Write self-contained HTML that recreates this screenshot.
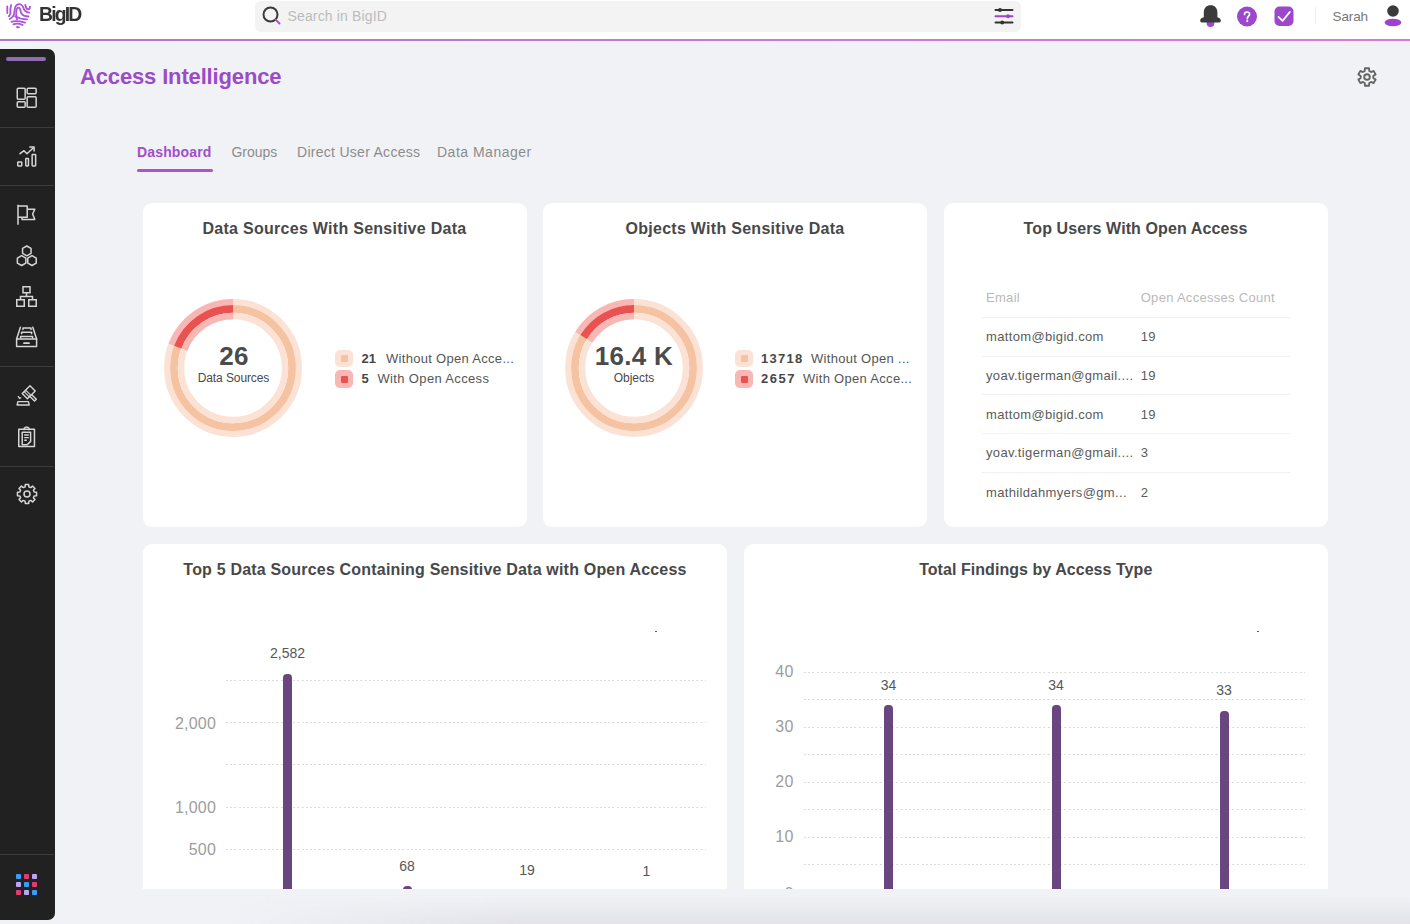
<!DOCTYPE html>
<html><head><meta charset="utf-8">
<style>
*{margin:0;padding:0;box-sizing:border-box}
html,body{width:1410px;height:924px;overflow:hidden;background:#f1f2f6;font-family:"Liberation Sans",sans-serif}
body{position:relative}
.a{position:absolute;white-space:nowrap;line-height:1}
svg{position:absolute;overflow:visible}
#hdr{position:absolute;left:0;top:0;width:1410px;height:39px;background:#fff}
#pline{position:absolute;left:0;top:39px;width:1410px;height:2.3px;background:linear-gradient(90deg,#ad77cf,#c47ad5 50%,#d97ad9)}
#side{position:absolute;left:0;top:49px;width:54.6px;height:870.5px;background:#212121;border-radius:0 7px 7px 0}
.sep{position:absolute;left:0;width:54px;height:1px;background:#3c3c3c}
.card{position:absolute;background:#fff;border-radius:9px;overflow:hidden}
.ttl{position:absolute;left:0;right:0;text-align:center;font-weight:700;font-size:16px;color:#484848;white-space:nowrap;line-height:1}
.tab{font-size:14px;color:#8c8c8c}
.lg{font-size:13px;color:#555}
.lgb{font-size:13px;color:#474747;font-weight:700}
.th{font-size:13px;color:#b9b9b9;letter-spacing:0.3px}
.td{font-size:13px;color:#5b5b5b;letter-spacing:0.35px}
.hr{position:absolute;left:38.5px;width:308px;height:1px;background:#f1f1f1}
.gl{position:absolute;height:1px;background:repeating-linear-gradient(90deg,#dcdcdc 0,#dcdcdc 2px,transparent 2px,transparent 4.2px)}
.yl{position:absolute;font-size:16px;color:#9d9d9d;letter-spacing:0.2px;text-align:right;line-height:1}
.bl{position:absolute;font-size:14px;color:#575757;text-align:center;line-height:1;width:60px}
.bar{position:absolute;width:9px;background:#6a4680;border-radius:3.8px 3.8px 0 0}
</style></head><body>
<div id="hdr"></div>
<div id="pline"></div>

<!-- logo -->
<svg style="left:0;top:0" width="36" height="32" viewBox="0 0 36 32">
  <g fill="none" stroke="#aa52d8" stroke-width="1.8" stroke-linecap="round" stroke-linejoin="round">
    <path d="M7.3 6.5 V13"/>
    <path d="M11.1 5 C10.2 8 10.2 11 10.4 13.2 C10.2 14.6 9.6 15.6 8.9 16.2"/>
    <path d="M9.8 19 C12.5 17.5 14 15.5 14.4 12.5 C14.6 9 14.6 6.5 17 4.8 C19.5 3.3 22.5 4.5 23.3 7.5 C24 10.5 25.5 12.2 29.3 12.6"/>
    <path d="M17 19.5 C16 16.5 16 13 16.4 10.5 C16.8 8 17.8 7.3 18.8 7.6 C20 8 20.4 9.5 20.8 12 C21.3 14.8 24 16.3 28.5 16.5"/>
    <path d="M25.3 5 C25.8 7.5 26.5 9.2 28 9.3 C29.5 9.3 30 8.5 30 6.6"/>
    <path d="M15 16.3 C18.5 18.3 22 19.3 27 19.4"/>
    <path d="M11.4 21.8 C15 20.5 19 21 25.2 22.6"/>
    <path d="M13.5 24.4 C16 23.2 19.5 23.6 22.7 25"/>
    <path d="M17 27 L19 27.3"/>
  </g>
</svg>
<div class="a" style="left:39px;top:3.8px;font-size:20px;font-weight:700;color:#333;letter-spacing:-1.9px;transform:scaleX(0.97);transform-origin:left">BigID</div>

<!-- search -->
<div style="position:absolute;left:254.5px;top:1px;width:766px;height:31px;background:#f3f3f3;border-radius:6px"></div>
<svg style="left:260px;top:5px" width="24" height="22" viewBox="0 0 24 22">
  <circle cx="10.5" cy="9.5" r="7" fill="none" stroke="#3a3a3a" stroke-width="2"/>
  <path d="M15.6 14.6 L19.5 18.5" stroke="#a64fd0" stroke-width="2" stroke-linecap="round"/>
</svg>
<div class="a" style="left:287.5px;top:9px;font-size:14px;color:#bcbcbc;letter-spacing:0.15px">Search in BigID</div>
<svg style="left:993px;top:6px" width="22" height="22" viewBox="0 0 22 22">
  <g stroke-width="2" stroke-linecap="round">
  <path d="M2.5 4 H19.5" stroke="#333"/><circle cx="7" cy="4" r="2" fill="#333"/>
  <path d="M2.5 10.2 H19.5" stroke="#a23fd0"/><circle cx="15" cy="10.2" r="2" fill="#a23fd0"/>
  <path d="M2.5 16.5 H19.5" stroke="#333"/><circle cx="9.2" cy="16.5" r="2" fill="#333"/>
  </g>
</svg>

<!-- header right -->
<svg style="left:1198px;top:4px" width="26" height="24" viewBox="0 0 26 24">
  <circle cx="12.5" cy="19" r="3.9" fill="#a245d0"/>
  <path d="M12.6 1.3 C8.5 1.3 5.8 4 5.8 8.5 L5.8 13.3 C3.5 13.8 2.2 15 2.2 16.4 C2.2 17.8 3 18.6 4.5 18.6 L20.5 18.6 C22 18.6 22.8 17.8 22.8 16.4 C22.8 15 21.5 13.8 19.4 13.3 L19.4 8.5 C19.4 4 16.7 1.3 12.6 1.3 Z" fill="#3b3b3b"/>
</svg>
<svg style="left:1236px;top:5.5px" width="22" height="22" viewBox="0 0 22 22">
  <circle cx="11" cy="10.5" r="10" fill="#9c47cc"/>
  <path d="M8.5 8.4 C8.5 6.8 9.6 6 11 6 C12.5 6 13.6 6.9 13.6 8.3 C13.6 10.1 11.3 10.4 11.3 12.6" fill="none" stroke="#fff" stroke-width="1.7" stroke-linecap="round"/>
  <circle cx="11.3" cy="15.1" r="1.05" fill="#fff"/>
</svg>
<svg style="left:1274px;top:5.7px" width="20" height="20" viewBox="0 0 20 20">
  <rect x="0.5" y="0.5" width="19" height="19.5" rx="5" fill="#9c47cc"/>
  <path d="M4.5 10.8 L8.6 14.9 L15.9 5.9" fill="none" stroke="#fff" stroke-width="1.7" stroke-linecap="round" stroke-linejoin="round"/>
</svg>
<div style="position:absolute;left:1315px;top:7px;width:1px;height:17px;background:#ececec"></div>
<div class="a" style="left:1332.5px;top:10.2px;font-size:13.5px;color:#777;letter-spacing:-0.1px">Sarah</div>
<svg style="left:1383px;top:3px" width="20" height="25" viewBox="0 0 20 25">
  <circle cx="10" cy="8" r="5.8" fill="#3a3a3a"/>
  <ellipse cx="10" cy="19.5" rx="8.3" ry="3.8" fill="#9c44cc"/>
</svg>

<!-- bottom shadow -->
<div style="position:absolute;left:0;top:896px;width:1410px;height:28px;background:linear-gradient(180deg,rgba(224,224,230,0) 0%,rgba(224,224,230,0.9) 100%);-webkit-mask-image:linear-gradient(90deg,transparent 0,transparent 230px,#000 520px,#000 100%)"></div>
<!-- sidebar -->
<div id="side"></div>
<div style="position:absolute;left:6px;top:57px;width:40px;height:4px;border-radius:2px;background:#8f6dae"></div>
<svg style="left:16px;top:87px" width="22" height="22" viewBox="0 0 22 22" fill="none" stroke="#d6d6d6" stroke-width="1.5">
  <rect x="1.25" y="1.25" width="7.9" height="10.9" rx="1"/><rect x="11.15" y="1.25" width="9" height="5.4" rx="1"/>
  <rect x="1.25" y="14.65" width="7.9" height="5.5" rx="1"/><rect x="11.15" y="9.65" width="9" height="10.5" rx="1"/>
</svg>
<div class="sep" style="top:127px"></div>
<svg style="left:16px;top:145px" width="22" height="22" viewBox="0 0 22 22" fill="none" stroke="#d6d6d6" stroke-width="1.5" stroke-linejoin="round" stroke-linecap="round">
  <rect x="1.75" y="16.95" width="4" height="4" rx="0.6"/><rect x="9.75" y="13.45" width="2.7" height="7.5" rx="0.6"/><rect x="16.15" y="9.45" width="3.5" height="11.5" rx="0.6"/>
  <path d="M4 8.7 L8 5.7 L11 8.7 L17.4 2.7"/><path d="M13.8 1.9 H18.1 V6"/>
</svg>
<div class="sep" style="top:184.5px"></div>
<svg style="left:17px;top:204px" width="20" height="22" viewBox="0 0 20 22" fill="none" stroke="#d6d6d6" stroke-width="1.5" stroke-linejoin="round">
  <path d="M1 0.8 V20.8"/><path d="M1 2 H10.2 V13.2 H1"/><path d="M10.2 5.2 H17.8 L15.6 10 L17.8 15.4 H5 V13.2"/>
</svg>
<svg style="left:15.5px;top:244.5px" width="22" height="22" viewBox="0 0 22 22" fill="none" stroke="#d6d6d6" stroke-width="1.5" stroke-linejoin="round">
  <path d="M10.80 1.00 L15.04 3.45 L15.04 8.35 L10.80 10.80 L6.56 8.35 L6.56 3.45Z"/>
  <path d="M5.60 10.70 L9.84 13.15 L9.84 18.05 L5.60 20.50 L1.36 18.05 L1.36 13.15Z"/>
  <path d="M16.00 10.70 L20.24 13.15 L20.24 18.05 L16.00 20.50 L11.76 18.05 L11.76 13.15Z"/>
</svg>
<svg style="left:16px;top:286px" width="22" height="22" viewBox="0 0 22 22" fill="none" stroke="#d6d6d6" stroke-width="1.5">
  <rect x="7" y="0.75" width="7" height="6"/><path d="M10.5 6.75 V10.5 M4.5 13 V10.5 H16.5 V13"/>
  <rect x="0.75" y="13.75" width="7.5" height="6.5"/><rect x="12.75" y="13.75" width="7.5" height="6.5"/>
</svg>
<svg style="left:16px;top:326px" width="22" height="22" viewBox="0 0 22 22" fill="none" stroke="#d6d6d6" stroke-width="1.5" stroke-linejoin="round" stroke-linecap="round">
  <path d="M4.4 1.2 L0.6 13 V20.6 H20.6 V13 L16.8 1.2"/><path d="M0.6 13 H20.6"/>
  <path d="M7 3.6 V2 H15 V3.6"/><path d="M5.6 7.8 V6.3 H15.6 V7.8"/><path d="M4.6 12 V10.6 H16.6 V12"/>
  <path d="M8 17.2 H13" stroke-width="1.8"/>
</svg>
<div class="sep" style="top:366px"></div>
<svg style="left:15px;top:384px" width="24" height="24" viewBox="0 0 24 24" fill="none" stroke="#d6d6d6" stroke-width="1.4" stroke-linejoin="round">
  <path d="M7.2 9.6 L15 1.8 L20.2 7 L12.4 14.8 Z"/>
  <path d="M10 7 L15 12" stroke-width="3.2" stroke="#d6d6d6"/>
  <path d="M10.6 7.6 L14.4 11.4" stroke-width="1.2" stroke="#202020"/>
  <path d="M16.5 10.5 L21.3 15.3 L19.5 17.1 L14.7 12.3"/>
  <path d="M2.1 21 L2.9 17.6 H13.4 L14.2 21 Z"/>
  <path d="M3 12.2 L4.6 14.6 L6.2 13.6" stroke-width="1.2"/>
</svg>
<svg style="left:17px;top:424.5px" width="20" height="23" viewBox="0 0 20 23" fill="none" stroke="#d6d6d6" stroke-width="1.5" stroke-linejoin="round">
  <rect x="1.75" y="4.25" width="15.7" height="17.3"/><path d="M7.2 5.2 V3.2 Q9.6 0.6 12 3.2 V5.2"/>
  <path d="M5.2 7.3 H13.6 V16.4 L10.2 19.8 H5.2 Z"/>
  <path d="M7.2 10 H11.8 M7.2 12.6 H11.8 M7.2 15.2 H9.8" stroke-width="1.4"/>
</svg>
<div class="sep" style="top:465.5px"></div>
<svg style="left:14.6px;top:482.4px" width="24" height="24" viewBox="0 0 24 24" fill="none" stroke="#d6d6d6" stroke-width="1.5" stroke-linejoin="round">
  <path d="M10.08 4.85 L10.32 2.45 L13.68 2.45 L13.92 4.85 L15.70 5.59 L17.56 4.05 L19.95 6.44 L18.41 8.30 L19.15 10.08 L21.55 10.32 L21.55 13.68 L19.15 13.92 L18.41 15.70 L19.95 17.56 L17.56 19.95 L15.70 18.41 L13.92 19.15 L13.68 21.55 L10.32 21.55 L10.08 19.15 L8.30 18.41 L6.44 19.95 L4.05 17.56 L5.59 15.70 L4.85 13.92 L2.45 13.68 L2.45 10.32 L4.85 10.08 L5.59 8.30 L4.05 6.44 L6.44 4.05 L8.30 5.59Z"/>
  <circle cx="12" cy="12" r="3"/>
</svg>
<div class="sep" style="top:853.5px"></div>
<svg style="left:16px;top:874px" width="22" height="22" viewBox="0 0 22 22">
  <rect x="0" y="0" width="5" height="5" rx="0.8" fill="#3b9cf6"/><rect x="8" y="0" width="5" height="5" rx="0.8" fill="#e23a6e"/><rect x="16" y="0" width="5" height="5" rx="0.8" fill="#b8a4f7"/>
  <rect x="0" y="8" width="5" height="5" rx="0.8" fill="#b8a4f7"/><rect x="8" y="8" width="5" height="5" rx="0.8" fill="#3b9cf6"/><rect x="16" y="8" width="5" height="5" rx="0.8" fill="#e23a6e"/>
  <rect x="0" y="16" width="5" height="5" rx="0.8" fill="#e23a6e"/><rect x="8" y="16" width="5" height="5" rx="0.8" fill="#b8a4f7"/><rect x="16" y="16" width="5" height="5" rx="0.8" fill="#3b9cf6"/>
</svg>

<!-- title & tabs -->
<div class="a" style="left:80px;top:66px;font-size:22px;font-weight:700;color:#9a4cc6;letter-spacing:-0.15px">Access Intelligence</div>
<svg style="left:1354.6px;top:64.5px" width="24" height="24" viewBox="0 0 24 24" fill="none" stroke="#646464" stroke-width="1.9" stroke-linejoin="round">
  <path d="M9.71 6.03 L9.98 3.23 L14.02 3.23 L14.29 6.03 L16.03 7.03 L18.58 5.86 L20.61 9.37 L18.32 11.00 L18.32 13.00 L20.61 14.63 L18.58 18.14 L16.03 16.97 L14.29 17.97 L14.02 20.77 L9.98 20.77 L9.71 17.97 L7.97 16.97 L5.42 18.14 L3.39 14.63 L5.68 13.00 L5.68 11.00 L3.39 9.37 L5.42 5.86 L7.97 7.03Z"/>
  <circle cx="12" cy="12" r="2.8"/>
</svg>
<div class="a" style="left:137px;top:145px;font-size:14px;font-weight:700;color:#a04fcc;letter-spacing:0.15px">Dashboard</div>
<div style="position:absolute;left:137px;top:168.8px;width:75.5px;height:3px;border-radius:1.5px;background:#a655d4"></div>
<div class="a tab" style="left:231.4px;top:145px">Groups</div>
<div class="a tab" style="left:297px;top:145px;letter-spacing:0.28px">Direct User Access</div>
<div class="a tab" style="left:437px;top:145px;letter-spacing:0.5px">Data Manager</div>

<!-- card 1 -->
<div class="card" style="left:142.5px;top:202.5px;width:384px;height:324.5px">
  <div class="ttl" style="top:18.3px;letter-spacing:0.28px">Data Sources With Sensitive Data</div>
  <svg style="left:20.7px;top:95.5px" width="140" height="140" viewBox="0 0 140 140" fill="none">
    <circle cx="70" cy="70" r="65.9" stroke="#fbe2d4" stroke-width="6"/>
    <circle cx="70" cy="70" r="59.05" stroke="#f5c2a2" stroke-width="7.7"/>
    <circle cx="70" cy="70" r="52" stroke="#fbe2d4" stroke-width="6.4"/>
    <path d="M70.00 4.10 A65.9 65.9 0 0 0 8.38 46.63" stroke="#f8b6b4" stroke-width="6"/>
    <path d="M70.00 10.95 A59.05 59.05 0 0 0 14.79 49.06" stroke="#ea524f" stroke-width="7.7"/>
    <path d="M70.00 18.00 A52 52 0 0 0 21.38 51.56" stroke="#f8b6b4" stroke-width="6.4"/>
  </svg>
  <div class="a" style="left:0;width:183px;text-align:center;top:140.6px;font-size:26px;font-weight:700;color:#4b4b4b;letter-spacing:0.4px">26</div>
  <div class="a" style="left:0;width:182px;text-align:center;top:169.1px;font-size:12px;color:#4a4a4a;letter-spacing:-0.1px">Data Sources</div>
  <div style="position:absolute;left:192.5px;top:147.3px;width:18px;height:17.5px;border-radius:5px;background:#fbe2d4"></div>
  <div style="position:absolute;left:198px;top:152.5px;width:7px;height:7px;border-radius:1px;background:#f5c2a2"></div>
  <div style="position:absolute;left:192.5px;top:167.8px;width:18px;height:17.5px;border-radius:5px;background:#f8b6b4"></div>
  <div style="position:absolute;left:198px;top:173px;width:7px;height:7px;border-radius:1px;background:#ea524f"></div>
  <div class="a lgb" style="left:219px;top:149.6px">21</div>
  <div class="a lg" style="left:243.5px;top:149.6px;letter-spacing:0.3px">Without Open Acce...</div>
  <div class="a lgb" style="left:219px;top:169.9px">5</div>
  <div class="a lg" style="left:235px;top:169.9px;letter-spacing:0.35px">With Open Access</div>
</div>

<!-- card 2 -->
<div class="card" style="left:543px;top:202.5px;width:384px;height:324.5px">
  <div class="ttl" style="top:18.3px;letter-spacing:0.28px">Objects With Sensitive Data</div>
  <svg style="left:20.5px;top:95.5px" width="140" height="140" viewBox="0 0 140 140" fill="none">
    <circle cx="70" cy="70" r="65.9" stroke="#fbe2d4" stroke-width="6"/>
    <circle cx="70" cy="70" r="59.05" stroke="#f5c2a2" stroke-width="7.7"/>
    <circle cx="70" cy="70" r="52" stroke="#fbe2d4" stroke-width="6.4"/>
    <path d="M70.00 4.10 A65.9 65.9 0 0 0 13.86 35.48" stroke="#f8b6b4" stroke-width="6"/>
    <path d="M70.00 10.95 A59.05 59.05 0 0 0 19.70 39.07" stroke="#ea524f" stroke-width="7.7"/>
    <path d="M70.00 18.00 A52 52 0 0 0 25.70 42.76" stroke="#f8b6b4" stroke-width="6.4"/>
  </svg>
  <div class="a" style="left:0;width:182px;text-align:center;top:140.6px;font-size:26px;font-weight:700;color:#4b4b4b;letter-spacing:0.3px">16.4 K</div>
  <div class="a" style="left:0;width:182px;text-align:center;top:169.1px;font-size:12px;color:#4a4a4a">Objects</div>
  <div style="position:absolute;left:192px;top:147.3px;width:18px;height:17.5px;border-radius:5px;background:#fbe2d4"></div>
  <div style="position:absolute;left:197.5px;top:152.5px;width:7px;height:7px;border-radius:1px;background:#f5c2a2"></div>
  <div style="position:absolute;left:192px;top:167.8px;width:18px;height:17.5px;border-radius:5px;background:#f8b6b4"></div>
  <div style="position:absolute;left:197.5px;top:173px;width:7px;height:7px;border-radius:1px;background:#ea524f"></div>
  <div class="a lgb" style="left:218px;top:149.6px;letter-spacing:1.3px">13718</div>
  <div class="a lg" style="left:268px;top:149.6px;letter-spacing:0.3px">Without Open ...</div>
  <div class="a lgb" style="left:218px;top:169.9px;letter-spacing:1.5px">2657</div>
  <div class="a lg" style="left:260px;top:169.9px;letter-spacing:0.3px">With Open Acce...</div>
</div>

<!-- card 3 -->
<div class="card" style="left:943.5px;top:202.5px;width:384px;height:324.5px">
  <div class="ttl" style="top:18.3px;letter-spacing:0.1px">Top Users With Open Access</div>
  <div class="a th" style="left:42.5px;top:88.4px">Email</div>
  <div class="a th" style="left:197.2px;top:88.4px">Open Accesses Count</div>
  <div class="hr" style="top:114.3px"></div>
  <div class="a td" style="left:42.5px;top:127px">mattom@bigid.com</div><div class="a td" style="left:197.2px;top:127px">19</div>
  <div class="hr" style="top:153px"></div>
  <div class="a td" style="left:42.5px;top:166.2px">yoav.tigerman@gmail....</div><div class="a td" style="left:197.2px;top:166.2px">19</div>
  <div class="hr" style="top:191.7px"></div>
  <div class="a td" style="left:42.5px;top:205px">mattom@bigid.com</div><div class="a td" style="left:197.2px;top:205px">19</div>
  <div class="hr" style="top:230.4px"></div>
  <div class="a td" style="left:42.5px;top:243.8px">yoav.tigerman@gmail....</div><div class="a td" style="left:197.2px;top:243.8px">3</div>
  <div class="hr" style="top:269.1px"></div>
  <div class="a td" style="left:42.5px;top:283.3px">mathildahmyers@gm...</div><div class="a td" style="left:197.2px;top:283.3px">2</div>
</div>

<!-- card 4 -->
<div class="card" style="left:143px;top:543.5px;width:584px;height:345.5px;border-radius:9px 9px 0 0">
  <div class="ttl" style="top:18.3px;letter-spacing:0.19px">Top 5 Data Sources Containing Sensitive Data with Open Access</div>
  <div class="gl" style="left:83px;width:480px;top:136.5px"></div>
  <div class="gl" style="left:83px;width:480px;top:178.7px"></div>
  <div class="gl" style="left:83px;width:480px;top:220.9px"></div>
  <div class="gl" style="left:83px;width:480px;top:263.1px"></div>
  <div class="gl" style="left:83px;width:480px;top:305.3px"></div>
  <div class="yl" style="left:0;width:73px;top:172px">2,000</div>
  <div class="yl" style="left:0;width:73px;top:256.4px">1,000</div>
  <div class="yl" style="left:0;width:73px;top:298.6px">500</div>
  <div class="bar" style="left:140px;top:130px;height:240px"></div>
  <div class="bar" style="left:259.5px;top:342.8px;height:20px"></div>
  <div class="bl" style="left:114.5px;top:102.3px">2,582</div>
  <div class="bl" style="left:234px;top:315.3px">68</div>
  <div class="bl" style="left:354px;top:319.5px">19</div>
  <div class="bl" style="left:473.5px;top:320.6px">1</div>
  <div style="position:absolute;left:511.5px;top:87px;width:2.8px;height:1.5px;border-radius:1px;background:#444"></div>
</div>

<!-- card 5 -->
<div class="card" style="left:743.5px;top:543.5px;width:584.5px;height:345.5px;border-radius:9px 9px 0 0">
  <div class="ttl" style="top:18.3px;letter-spacing:0.05px">Total Findings by Access Type</div>
  <div class="gl" style="left:60.7px;width:501px;top:128.2px"></div>
  <div class="gl" style="left:60.7px;width:501px;top:155.7px"></div>
  <div class="gl" style="left:60.7px;width:501px;top:183.2px"></div>
  <div class="gl" style="left:60.7px;width:501px;top:210.7px"></div>
  <div class="gl" style="left:60.7px;width:501px;top:238.2px"></div>
  <div class="gl" style="left:60.7px;width:501px;top:265.7px"></div>
  <div class="gl" style="left:60.7px;width:501px;top:293.2px"></div>
  <div class="gl" style="left:60.7px;width:501px;top:320.7px"></div>
  <div class="yl" style="left:0;width:50px;top:120.8px">40</div>
  <div class="yl" style="left:0;width:50px;top:175.8px">30</div>
  <div class="yl" style="left:0;width:50px;top:230.8px">20</div>
  <div class="yl" style="left:0;width:50px;top:285.8px">10</div>
  <div class="yl" style="left:0;width:50px;top:342.8px">0</div>
  <div class="bar" style="left:140.6px;top:161.5px;height:200px"></div>
  <div class="bar" style="left:308px;top:161.5px;height:200px"></div>
  <div class="bar" style="left:476px;top:167px;height:200px"></div>
  <div class="bl" style="left:115.1px;top:134.3px">34</div>
  <div class="bl" style="left:282.5px;top:134.3px">34</div>
  <div class="bl" style="left:450.5px;top:139.8px">33</div>
  <div style="position:absolute;left:513px;top:87px;width:2.8px;height:1.5px;border-radius:1px;background:#444"></div>
</div>

</body></html>
